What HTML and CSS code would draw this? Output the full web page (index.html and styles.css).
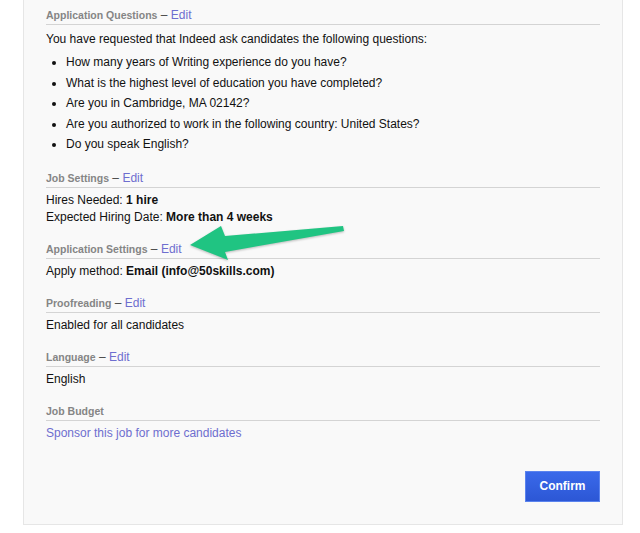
FILE: index.html
```html
<!DOCTYPE html>
<html>
<head>
<meta charset="utf-8">
<link rel="stylesheet" href="styles.css">
</head>
<body>
<div class="panel">
  <div class="section first">
    <div class="sec-head"><span class="label">Application Questions</span> <span class="dash">–</span> <a class="link">Edit</a></div>
    <div class="sec-body">
      <p class="line">You have requested that Indeed ask candidates the following questions:</p>
      <ul class="questions">
        <li>How many years of Writing experience do you have?</li>
        <li>What is the highest level of education you have completed?</li>
        <li>Are you in Cambridge, MA 02142?</li>
        <li>Are you authorized to work in the following country: United States?</li>
        <li>Do you speak English?</li>
      </ul>
    </div>
  </div>
  <div class="section">
    <div class="sec-head"><span class="label">Job Settings</span> <span class="dash">–</span> <a class="link">Edit</a></div>
    <div class="sec-body">
      <p class="line">Hires Needed: <b>1 hire</b></p>
      <p class="line">Expected Hiring Date: <b>More than 4 weeks</b></p>
    </div>
  </div>
  <div class="section">
    <div class="sec-head"><span class="label">Application Settings</span> <span class="dash">–</span> <a class="link">Edit</a></div>
    <div class="sec-body">
      <p class="line">Apply method: <b>Email (info@50skills.com)</b></p>
    </div>
  </div>
  <div class="section">
    <div class="sec-head"><span class="label">Proofreading</span> <span class="dash">–</span> <a class="link">Edit</a></div>
    <div class="sec-body">
      <p class="line">Enabled for all candidates</p>
    </div>
  </div>
  <div class="section">
    <div class="sec-head"><span class="label">Language</span> <span class="dash">–</span> <a class="link">Edit</a></div>
    <div class="sec-body">
      <p class="line">English</p>
    </div>
  </div>
  <div class="section">
    <div class="sec-head"><span class="label">Job Budget</span></div>
    <div class="sec-body">
      <p class="line"><a class="link">Sponsor this job for more candidates</a></p>
    </div>
  </div>
  <div class="actions">
    <button class="confirm">Confirm</button>
  </div>
  <svg class="arrow" width="640" height="533" viewBox="0 0 640 533">
    <polygon points="189,245 220,226 224,236 342,226 343,231 224,252 227,260" fill="#20c482"/>
  </svg>
</div>
</body>
</html>
```

FILE: styles.css
```css
html, body {
  margin: 0;
  padding: 0;
  background: #ffffff;
}

body {
  font-family: "Liberation Sans", Arial, Helvetica, sans-serif;
  color: #111;
  width: 640px;
  height: 533px;
  overflow: hidden;
}

.panel {
  position: relative;
  margin-left: 23px;
  width: 554px;
  padding: 0 22px 22px 22px;
  background: #f9f9f9;
  border: 1px solid #e6e6e6;
  border-top: none;
}

.section {
  margin-top: 14px;
}

.section.first {
  margin-top: 0;
  padding-top: 6px;
}

.sec-head {
  line-height: 18px;
  height: 18px;
  border-bottom: 1px solid #d4d4d4;
  font-size: 12px;
  white-space: nowrap;
}

.label {
  font-size: 10.5px;
  font-weight: bold;
  color: #858585;
}

.dash {
  color: #444;
}

.link {
  color: #6e6ecf;
  text-decoration: none;
  cursor: pointer;
}

.sec-body {
  margin-top: 4px;
  font-size: 12px;
}

.first .sec-body {
  margin-top: 6px;
}

.line {
  margin: 0;
  line-height: 17px;
}

.questions {
  margin: 4px 0 0 0;
  padding-left: 20px;
}

.questions li {
  line-height: 20.5px;
}

.actions {
  display: flex;
  justify-content: flex-end;
  margin-top: 29px;
}

.confirm {
  width: 75px;
  height: 31px;
  border: 1px solid #5a83ee;
  background: linear-gradient(#3a69ea, #2c57d5);
  color: #fff;
  font-family: "Liberation Sans", Arial, sans-serif;
  font-weight: bold;
  font-size: 12px;
  padding: 0;
}

.arrow {
  position: absolute;
  left: -23px;
  top: 0;
  pointer-events: none;
  filter: drop-shadow(0 1px 1px rgba(0, 0, 0, 0.25));
}
```
